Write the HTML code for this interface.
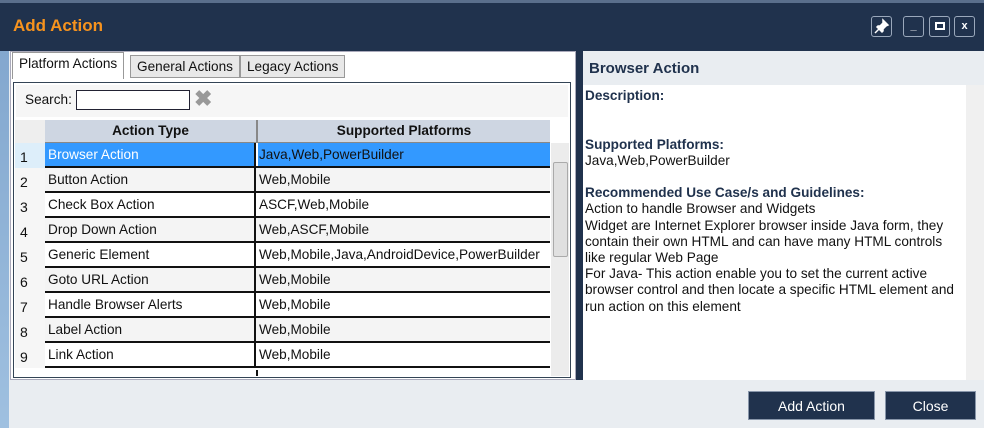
<!DOCTYPE html>
<html><head><meta charset="utf-8"><style>
*{margin:0;padding:0;box-sizing:border-box}
body{width:984px;height:428px;position:relative;overflow:hidden;background:#e9edf1;font-family:"Segoe UI","Liberation Sans",sans-serif;font-size:13.6px;color:#111}
.a{position:absolute}
.tb{left:0;top:0;width:984px;height:51px;background:#20324d;border-top:3px solid #5a6f8c}
.ttl{left:13px;top:16px;color:#f7931e;font-weight:bold;font-size:17px}
.wb{top:16px;width:21px;height:21px;border:1px solid #9aa8bb;border-radius:3px;color:#fff;font-size:11px;text-align:center;line-height:19px;font-weight:bold}
.left{left:10px;top:51px;width:566px;height:329px;background:#fff;border:1px solid #aab}
.tab{top:55px;height:23px;border:1px solid #999;background:#e8e8e8;padding:3px 6px}
.row{left:15px;width:535px;height:25px;border-bottom:2px solid #111}
.num{position:absolute;left:0;top:0;width:30px;height:25px;background:#f6f6f6;padding:6px 0 0 5px;font-size:14px}
.c1{position:absolute;left:30px;top:0;width:211px;height:23px;padding:4px 0 0 3px;border-right:2px solid #111}
.c2{position:absolute;left:243px;top:0;width:292px;height:23px;padding:4px 0 0 1px}
.rt{left:583px;top:51px;width:401px;height:329px;background:#fff}
.btn{top:391px;height:29px;background:#20324d;color:#fff;font-size:14px;text-align:center;line-height:29px;border:1px solid #8896aa}
</style></head><body>
<div class="a" style="left:0;top:0;width:9px;height:428px;background:linear-gradient(#7fa4cc,#9fc0e0)"></div>
<div class="a tb"></div>
<div class="a ttl">Add Action</div>
<div class="a wb" style="left:871px"><svg width="19" height="19" viewBox="0 0 19 19"><path d="M11 3l5 5-2 1-3 3 0 2-1 1-5-5 1-1 2 0 3-3z M7 12l-4 4" stroke="#fff" stroke-width="1.5" fill="#fff"/></svg></div>
<div class="a wb" style="left:903px">_</div>
<div class="a wb" style="left:929px"><span style="display:inline-block;width:10px;height:8px;border:2px solid #fff;margin-top:5px;vertical-align:top"></span></div>
<div class="a wb" style="left:954px">x</div>
<div class="a left"></div>
<div class="a tab" style="left:12px;top:52px;height:27px;background:#fff;border-bottom:none">Platform Actions</div>
<div class="a tab" style="left:130px">General Actions</div>
<div class="a tab" style="left:240px">Legacy Actions</div>
<div class="a" style="left:13px;top:82px;width:558px;height:296px;border:1px solid #345;background:#fff"></div>
<div class="a" style="left:16px;top:85px;width:552px;height:32px;background:#f6f6f6"></div>
<div class="a" style="left:25px;top:92px">Search:</div>
<div class="a" style="left:76px;top:90px;width:114px;height:20px;border:1px solid #223;background:#fff"></div>
<div class="a" style="left:194px;top:86px;color:#999;font-size:22px;font-weight:bold">✖</div>
<div class="a" style="left:15px;top:120px;width:30px;height:23px;background:#eee"></div>
<div class="a" style="left:45px;top:120px;width:505px;height:23px;background:#ced6e2;border-bottom:1px solid #888"></div>
<div class="a" style="left:45px;top:123px;width:211px;text-align:center;font-weight:bold">Action Type</div>
<div class="a" style="left:256px;top:120px;width:2px;height:23px;background:#888"></div>
<div class="a" style="left:258px;top:123px;width:292px;text-align:center;font-weight:bold">Supported Platforms</div>
<div class="a row" style="top:143px"><div class="num" style="background:#ddeefa">1</div><div class="c1" style="background:#3399ff;color:#fff">Browser Action</div><div class="c2" style="background:#3399ff;color:#111">Java,Web,PowerBuilder</div></div>
<div class="a row" style="top:168px;background:#f4f4f4"><div class="num">2</div><div class="c1">Button Action</div><div class="c2">Web,Mobile</div></div>
<div class="a row" style="top:193px"><div class="num">3</div><div class="c1">Check Box Action</div><div class="c2">ASCF,Web,Mobile</div></div>
<div class="a row" style="top:218px;background:#f4f4f4"><div class="num">4</div><div class="c1">Drop Down Action</div><div class="c2">Web,ASCF,Mobile</div></div>
<div class="a row" style="top:243px"><div class="num">5</div><div class="c1">Generic Element</div><div class="c2">Web,Mobile,Java,AndroidDevice,PowerBuilder</div></div>
<div class="a row" style="top:268px;background:#f4f4f4"><div class="num">6</div><div class="c1">Goto URL Action</div><div class="c2">Web,Mobile</div></div>
<div class="a row" style="top:293px"><div class="num">7</div><div class="c1">Handle Browser Alerts</div><div class="c2">Web,Mobile</div></div>
<div class="a row" style="top:318px;background:#f4f4f4"><div class="num">8</div><div class="c1">Label Action</div><div class="c2">Web,Mobile</div></div>
<div class="a row" style="top:343px"><div class="num">9</div><div class="c1">Link Action</div><div class="c2">Web,Mobile</div></div>
<div class="a" style="left:15px;top:370px;width:535px;height:6px;background:#fff"></div>
<div class="a" style="left:256px;top:370px;width:2px;height:6px;background:#111"></div>
<div class="a" style="left:551px;top:143px;width:18px;height:233px;background:#ececec"></div>
<div class="a" style="left:553px;top:162px;width:15px;height:95px;background:#e0e0e0;border:1px solid #aaa;border-radius:2px"></div>
<div class="a" style="left:576px;top:51px;width:7px;height:329px;background:#20324d"></div>
<div class="a rt"></div>
<div class="a" style="left:583px;top:51px;width:401px;height:34px;background:#e9edf1"></div>
<div class="a" style="left:589px;top:60px;font-weight:bold;font-size:15px;color:#20324d">Browser Action</div>
<div class="a" style="left:966px;top:85px;width:18px;height:295px;background:#f0f0f0"></div>
<div class="a" style="left:585px;top:88px;width:378px;line-height:16.2px">
<b style="color:#20324d">Description:</b><br><br><br>
<b style="color:#20324d">Supported Platforms:</b><br>Java,Web,PowerBuilder<br><br>
<b style="color:#20324d">Recommended Use Case/s and Guidelines:</b><br>Action to handle Browser and Widgets<br>Widget are Internet Explorer browser inside Java form, they contain their own HTML and can have many HTML controls like regular Web Page<br>For Java- This action enable you to set the current active browser control and then locate a specific HTML element and run action on this element</div>
<div class="a btn" style="left:748px;width:127px">Add Action</div>
<div class="a btn" style="left:885px;width:91px">Close</div>
</body></html>
